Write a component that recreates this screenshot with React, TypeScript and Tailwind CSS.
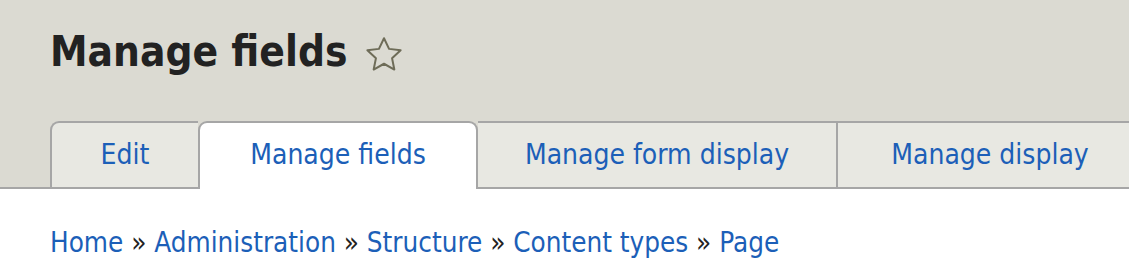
import React from 'react';

const font = { fontFamily: '"DejaVu Sans Condensed", "DejaVu Sans", sans-serif' };

function StarIcon() {
  return (
    <svg width="42" height="42" viewBox="0 0 24 24" className="ml-[16px] mt-[6px]" fill="none" stroke="#6e6c58" strokeWidth="1.15" strokeLinejoin="round">
      <path d="M12 2.4l2.9 6.1 6.6.8-4.9 4.5 1.3 6.5L12 17l-5.9 3.3 1.3-6.5-4.9-4.5 6.6-.8z" />
    </svg>
  );
}

export default function App() {
  const crumbs = ['Home', 'Administration', 'Structure', 'Content types', 'Page'];

  return (
    <div className="min-h-[280px] bg-white overflow-hidden" style={font}>
      <div className="bg-[#dbdad2] border-b-2 border-[#a6a6a6] pl-[50px]">
        <div className="flex items-center pt-[27px]">
          <h1 className="text-[42px] leading-[50px] font-bold text-[#222]">Manage fields</h1>
          <StarIcon />
        </div>
        <ul className="flex items-end mt-[44px] text-[28px] text-[#1c5fb8]">
          <li className="w-[148px] shrink-0 h-[66px] flex items-center justify-center bg-[#e8e8e2] border-l-2 border-t-2 border-[#a6a6a6] rounded-tl-[9px]">
            Edit
          </li>
          <li className="w-[280px] shrink-0 h-[68px] -mb-[2px] pb-[2px] flex items-center justify-center bg-white border-x-2 border-t-2 border-[#a6a6a6] rounded-t-[9px]">
            Manage fields
          </li>
          <li className="w-[360px] shrink-0 h-[66px] flex items-center justify-center bg-[#e8e8e2] border-t-2 border-r-2 border-[#a6a6a6]">
            Manage form display
          </li>
          <li className="w-[304px] shrink-0 h-[66px] flex items-center justify-center bg-[#e8e8e2] border-t-2 border-[#a6a6a6]">
            Manage display
          </li>
        </ul>
      </div>
      <nav className="pl-[50px] pt-[37px] text-[27.6px] leading-[34px]">
        {crumbs.map((c, i) => (
          <span key={c}>
            <a href="#" className="text-[#1c5fb8]">{c}</a>
            {i < crumbs.length - 1 && <span className="text-[#222]"> » </span>}
          </span>
        ))}
      </nav>
    </div>
  );
}
